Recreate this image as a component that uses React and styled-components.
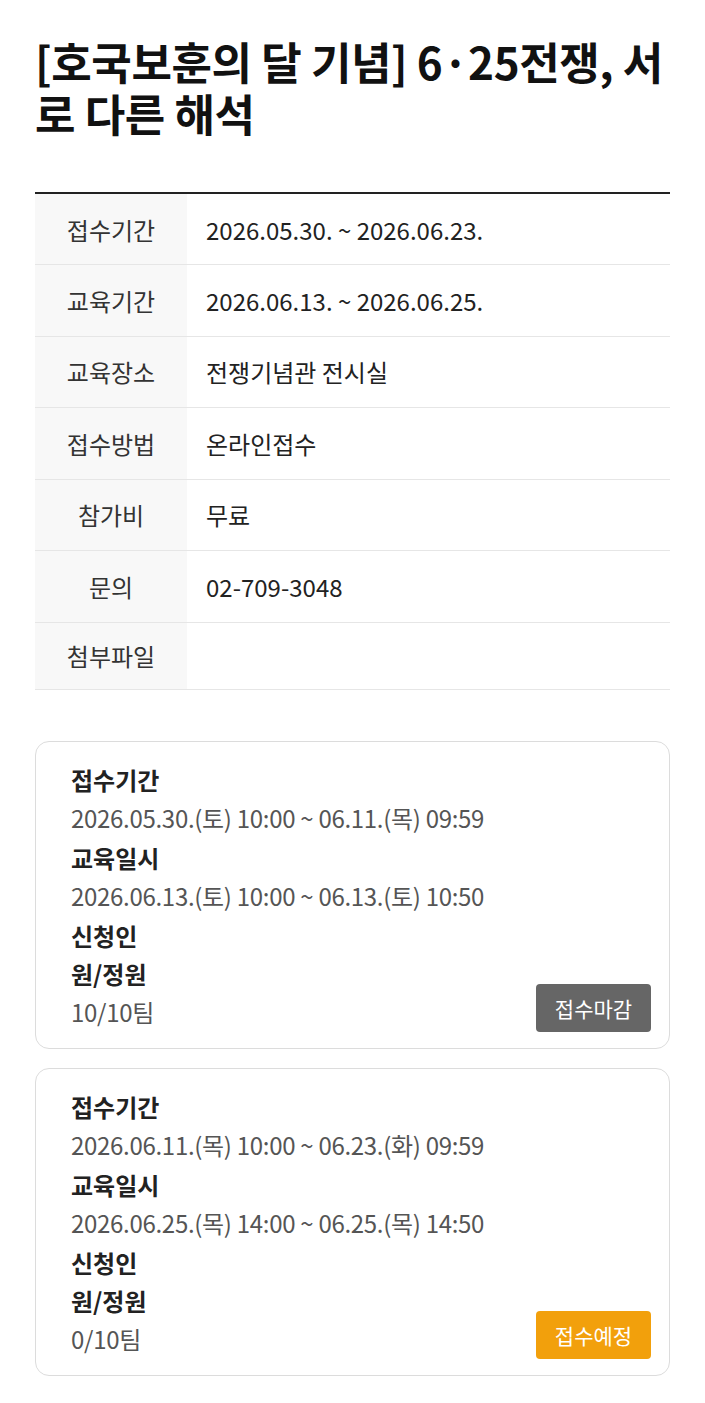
import React from "react";
import styled, { createGlobalStyle } from "styled-components";

const GlobalStyle = createGlobalStyle`
    body {
        margin: 0;
        background: #fff;
        font-family: "Noto Sans CJK KR", "Noto Sans", sans-serif;
        color: #222;
    }
`;

const info = [
    { label: "접수기간", value: "2026.05.30. ~ 2026.06.23." },
    { label: "교육기간", value: "2026.06.13. ~ 2026.06.25." },
    { label: "교육장소", value: "전쟁기념관 전시실" },
    { label: "접수방법", value: "온라인접수" },
    { label: "참가비", value: "무료" },
    { label: "문의", value: "02-709-3048" },
    { label: "첨부파일", value: "" },
];

const sessions = [
    {
        id: 1,
        apply: "2026.05.30.(토) 10:00 ~ 06.11.(목) 09:59",
        edu: "2026.06.13.(토) 10:00 ~ 06.13.(토) 10:50",
        count: "10/10팀",
        status: "접수마감",
        closed: true,
    },
    {
        id: 2,
        apply: "2026.06.11.(목) 10:00 ~ 06.23.(화) 09:59",
        edu: "2026.06.25.(목) 14:00 ~ 06.25.(목) 14:50",
        count: "0/10팀",
        status: "접수예정",
        closed: false,
    },
];

const App = () => {
    return (
        <Page>
            <GlobalStyle />
            <Title>[호국보훈의 달 기념] 6·25전쟁, 서로 다른 해석</Title>

            <InfoTable>
                <tbody>
                    {info.map((row, i) => (
                        <InfoRow key={row.label} $last={i === info.length - 1}>
                            <th>{row.label}</th>
                            <td>{row.value}</td>
                        </InfoRow>
                    ))}
                </tbody>
            </InfoTable>

            <SessionList>
                {sessions.map(s => (
                    <SessionCard key={s.id}>
                        <SessionInfo>
                            <dt>접수기간</dt>
                            <dd>{s.apply}</dd>
                            <dt>교육일시</dt>
                            <dd>{s.edu}</dd>
                            <dt className="narrow">신청인원/정원</dt>
                            <dd>{s.count}</dd>
                        </SessionInfo>
                        <StatusButton $closed={s.closed}>{s.status}</StatusButton>
                    </SessionCard>
                ))}
            </SessionList>
        </Page>
    );
};

const Page = styled.div`
    padding: 35px 35px 28px;
`;

const Title = styled.h1`
    margin: 0 0 53px;
    font-size: 44px;
    font-weight: 700;
    line-height: 52px;
    letter-spacing: -0.4px;
    color: #111;
`;

const InfoTable = styled.table`
    width: 100%;
    border-collapse: collapse;
    border-top: 2px solid #222;
    margin-bottom: 51px;
`;

const InfoRow = styled.tr`
    height: ${({ $last }) => ($last ? "67px" : "71.5px")};
    border-bottom: 1px solid #e6e6e6;

    th {
        width: 152px;
        background: #f8f8f8;
        font-size: 24px;
        font-weight: 400;
        color: #333;
        text-align: center;
        padding: 0;
    }

    td {
        padding: 0 0 0 19px;
        font-size: 24px;
        color: #222;
    }
`;

const SessionList = styled.div`
    display: flex;
    flex-direction: column;
    gap: 19px;
`;

const SessionCard = styled.div`
    display: flex;
    justify-content: space-between;
    align-items: flex-end;
    border: 1px solid #dcdcdc;
    border-radius: 14px;
    padding: 19px 18px 16px 35px;
`;

const SessionInfo = styled.dl`
    margin: 0 0 1px;
    font-size: 24px;
    line-height: 38px;

    dt {
        font-weight: 700;
        color: #222;
    }

    dt.narrow {
        max-width: 90px;
    }

    dd {
        margin: 0 0 2px;
        color: #555;
        letter-spacing: -0.3px;
    }

    dd:last-child {
        margin-bottom: 0;
    }
`;

const StatusButton = styled.button`
    width: 115px;
    height: 48px;
    border: none;
    border-radius: 4px;
    background: ${({ $closed }) => ($closed ? "#666666" : "#f2a00c")};
    color: #fff;
    font-family: inherit;
    font-size: 21px;
    cursor: pointer;
`;

export default App;
